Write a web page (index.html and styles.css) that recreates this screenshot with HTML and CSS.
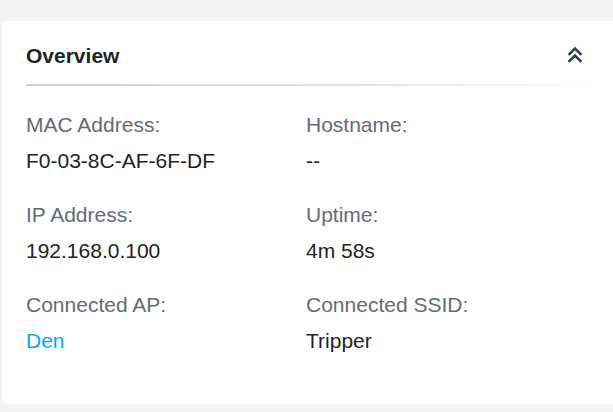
FILE: index.html
```html
<!DOCTYPE html>
<html>
<head>
<meta charset="utf-8">
<link rel="stylesheet" href="styles.css">
</head>
<body>
<div class="page">
  <section class="card">
    <div class="card-header">
      <h2 class="title">Overview</h2>
      <svg class="collapse" width="16" height="17" viewBox="0 0 16 17" fill="none" stroke="#343e4e" stroke-width="2.6" stroke-linecap="square">
        <polyline points="2.5,8 8,2.6 13.5,8"/>
        <polyline points="2.5,15 8,9.6 13.5,15"/>
      </svg>
    </div>
    <div class="divider"></div>
    <div class="info-grid">
      <div class="item"><div class="label">MAC Address:</div><div class="value">F0-03-8C-AF-6F-DF</div></div>
      <div class="item"><div class="label">Hostname:</div><div class="value">--</div></div>
      <div class="item"><div class="label">IP Address:</div><div class="value">192.168.0.100</div></div>
      <div class="item"><div class="label">Uptime:</div><div class="value">4m 58s</div></div>
      <div class="item"><div class="label">Connected AP:</div><div class="value link">Den</div></div>
      <div class="item"><div class="label">Connected SSID:</div><div class="value">Tripper</div></div>
    </div>
  </section>
</div>
</body>
</html>
```

FILE: styles.css
```css
html, body {
  margin: 0;
  padding: 0;
  background: #f2f3f5;
  font-family: "Liberation Sans", Arial, sans-serif;
  overflow: hidden;
}
.page {
  width: 613px;
  height: 412px;
  padding: 21px 0 0 2px;
  box-sizing: border-box;
}
.card {
  background: #ffffff;
  border-radius: 5px;
  width: 640px;
  height: 383px;
  box-sizing: border-box;
  padding: 20px 24px 0 24px;
}
.card-header {
  display: flex;
  align-items: center;
  justify-content: space-between;
  width: 557px;
  height: 30px;
}
.title {
  margin: 0;
  font-size: 21px;
  line-height: 30px;
  font-weight: bold;
  color: #222326;
}
.collapse {
  display: block;
  margin-top: -3px;
}
.divider {
  margin-top: 13px;
  width: 565px;
  height: 2px;
  background: linear-gradient(to right, #cfd0d2 0%, #e2e3e4 60%, rgba(240,240,240,0) 100%);
}
.info-grid {
  margin-top: 24px;
  display: grid;
  grid-template-columns: 280px 280px;
  row-gap: 24px;
}
.item {
  display: flex;
  flex-direction: column;
  gap: 6px;
}
.label {
  font-size: 21px;
  line-height: 30px;
  color: #636c75;
}
.value {
  font-size: 21px;
  line-height: 30px;
  color: #222326;
}
.value.link {
  color: #00a9f4;
}
```
